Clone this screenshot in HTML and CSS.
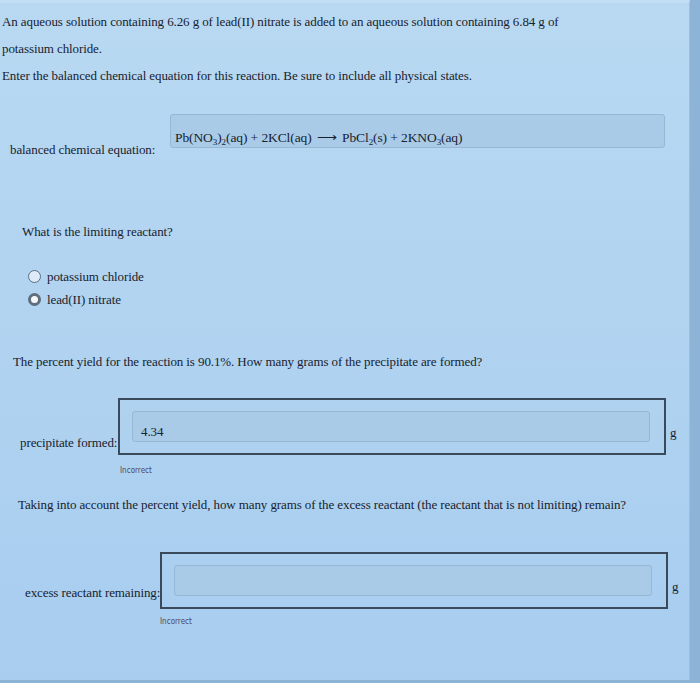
FILE: index.html
```html
<!DOCTYPE html>
<html lang="en">
<head>
    <meta charset="UTF-8">
    <title>Limiting reactant</title>
    <link rel="stylesheet" href="styles.css">
</head>
<body>
<div class="panel">
    <p class="lead">An aqueous solution containing 6.26 g of lead(II) nitrate is added to an aqueous solution containing 6.84 g of potassium chloride.</p>
    <p class="lead">Enter the balanced chemical equation for this reaction. Be sure to include all physical states.</p>

    <!-- equation -->
    <div class="eqRow">
        <span class="label">balanced chemical equation:</span>
        <div class="field eqField">Pb(NO<sub>3</sub>)<sub>2</sub>(aq) + 2KCl(aq) <span class="arrow">&#10230;</span> PbCl<sub>2</sub>(s) + 2KNO<sub>3</sub>(aq)</div>
    </div>

    <!-- limiting reactant -->
    <p class="question q1">What is the limiting reactant?</p>
    <ul class="choices">
        <li><span class="radio"></span>potassium chloride</li>
        <li><span class="radio checked"></span>lead(II) nitrate</li>
    </ul>

    <!-- precipitate -->
    <p class="question q2">The percent yield for the reaction is 90.1%. How many grams of the precipitate are formed?</p>
    <div class="answer a1">
        <span class="label">precipitate formed:</span>
        <div class="frame">
            <div class="field">4.34</div>
        </div>
        <span class="unit">g</span>
    </div>
    <div class="status s1">Incorrect</div>

    <!-- excess -->
    <p class="question q3">Taking into account the percent yield, how many grams of the excess reactant (the reactant that is not limiting) remain?</p>
    <div class="answer a2">
        <span class="label">excess reactant remaining:</span>
        <div class="frame">
            <div class="field"></div>
        </div>
        <span class="unit">g</span>
    </div>
    <div class="status s2">Incorrect</div>
</div>
</body>
</html>
```

FILE: styles.css
```css
* {
    margin: 0;
    padding: 0;
}
body {
    background-color: #8db3d6;
    font-family: "Liberation Serif", "Times New Roman", serif;
    color: #18222e;
    font-size: 13px;
    letter-spacing: -0.1px;
}
.panel {
    width: 690px;
    height: 680px;
    background: linear-gradient(#b9d9f2, #b2d4f1 40%, #a8cdef);
    border-right: 1px solid #9dbfdc;
    border-top: 3px solid #c3ddf2;
    box-sizing: border-box;
    padding: 5px 0 0 2px;
}
.lead {
    line-height: 27px;
    width: 600px;
}
.label {
    white-space: nowrap;
}
.field {
    background-color: #a9cbe8;
    border: 1px solid #97b7d3;
    border-radius: 3px;
    box-sizing: border-box;
}
.eqRow {
    display: flex;
    align-items: flex-start;
    margin-top: 25px;
    padding-left: 8px;
}
.eqRow .label {
    width: 160px;
    padding-top: 27px;
    line-height: 17px;
}
.eqField {
    width: 495px;
    height: 34px;
    padding: 15px 0 0 4px;
    font-size: 13.5px;
    line-height: 16px;
}
.eqField sub {
    font-size: 9px;
    vertical-align: -3px;
}
.arrow {
    font-size: 14px;
    padding: 0 2px;
}
.question {
    line-height: 20px;
}
.q1 {
    margin-top: 64px;
    padding-left: 20px;
}
.choices {
    list-style: none;
    margin-top: 23px;
    padding-left: 26px;
}
.choices li {
    display: flex;
    align-items: center;
    height: 23px;
}
.radio {
    width: 11px;
    height: 11px;
    border: 1px solid #5c6f80;
    border-radius: 50%;
    background-color: #dcebf7;
    margin-right: 6px;
}
.radio.checked {
    width: 7px;
    height: 7px;
    border: 3px solid #5f6e7c;
    background-color: #f4f8fb;
}
.q2 {
    margin-top: 41px;
    padding-left: 11px;
}
.answer {
    display: flex;
    align-items: flex-end;
}
.a1 {
    margin-top: 26px;
    padding-left: 18px;
}
.a2 {
    margin-top: 37px;
    padding-left: 23px;
}
.a1 .label {
    width: 98px;
    padding-bottom: 4px;
}
.a2 .label {
    width: 135px;
    padding-bottom: 8px;
}
.frame {
    border: 2px solid #3b4a5a;
    padding: 11px 14px 12px 12px;
    box-sizing: border-box;
    height: 57px;
}
.a1 .frame {
    width: 548px;
}
.a2 .frame {
    width: 508px;
}
.frame .field {
    height: 31px;
    padding: 12px 0 0 8px;
    line-height: 15px;
}
.unit {
    padding: 0 0 14px 4px;
}
.status {
    font-family: "DejaVu Sans Condensed", "DejaVu Sans", sans-serif;
    font-size: 8px;
    letter-spacing: 0;
    color: #4d4a63;
    margin-top: 11px;
}
.s1 {
    padding-left: 118px;
}
.s2 {
    padding-left: 158px;
    margin-top: 8px;
}
.q3 {
    margin-top: 20px;
    padding-left: 16px;
}
```
